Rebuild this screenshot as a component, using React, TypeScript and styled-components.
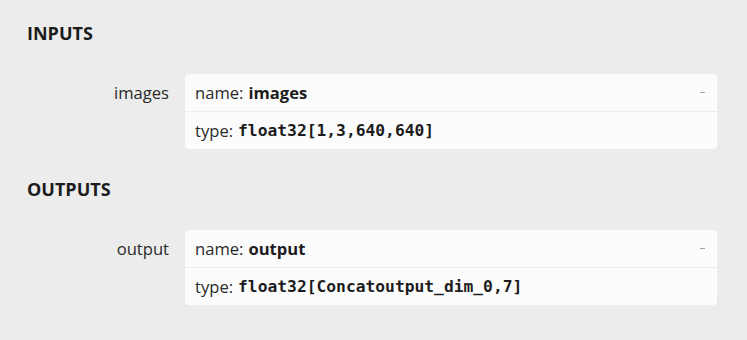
import { createGlobalStyle } from "styled-components";
import styled from "styled-components";

const GlobalStyle = createGlobalStyle`
  html, body {
    margin: 0;
    padding: 0;
    background: #ececec;
  }
  body {
    font-family: "Open Sans", "Noto Sans", sans-serif;
    color: #202020;
  }
`;

interface Argument {
  label: string;
  name: string;
  type: string;
}

const inputs: Argument[] = [
  { label: "images", name: "images", type: "float32[1,3,640,640]" }
];

const outputs: Argument[] = [
  { label: "output", name: "output", type: "float32[Concatoutput_dim_0,7]" }
];

const Page = styled.div`
  width: 747px;
  height: 340px;
  padding: 21px 30px 0 27px;
  box-sizing: border-box;
  display: flex;
  flex-direction: column;
`;

const Section = styled.section`
  display: flex;
  flex-direction: column;
  margin-bottom: 28px;
`;

const Heading = styled.h2`
  margin: 0 0 29px 0;
  font-size: 18px;
  font-weight: 700;
  line-height: 24px;
  color: #1c1c1c;
`;

const Row = styled.div`
  display: grid;
  grid-template-columns: 158px 1fr;
  align-items: start;
`;

const Label = styled.div`
  padding-right: 16px;
  height: 37px;
  display: flex;
  align-items: center;
  justify-content: flex-end;
  font-size: 16.6px;
  color: #2a2a2a;
`;

const Card = styled.div`
  background: #fcfcfc;
  border-radius: 4px;
  display: flex;
  flex-direction: column;
  overflow: hidden;
`;

const Line = styled.div<{ $divider?: boolean }>`
  height: 37px;
  display: flex;
  align-items: center;
  padding: 0 10px;
  font-size: 16.6px;
  color: #2a2a2a;
  border-bottom: ${({ $divider }) => ($divider ? "1px solid #ececec" : "none")};
`;

const Value = styled.b`
  font-weight: 700;
  margin-left: 5px;
  color: #1c1c1c;
`;

const Mono = styled.code`
  font-family: "DejaVu Sans Mono", "Liberation Mono", monospace;
  font-weight: 700;
  font-size: 16.3px;
  margin-left: 5px;
  color: #1c1c1c;
`;

const Toggle = styled.span`
  margin-left: auto;
  margin-right: 2px;
  width: 5px;
  height: 1px;
  background: #a0a0a0;
`;

const ArgumentRow = ({ arg }: { arg: Argument }) => (
  <Row>
    <Label>{arg.label}</Label>
    <Card>
      <Line $divider>
        name:<Value>{arg.name}</Value>
        <Toggle />
      </Line>
      <Line>
        type:<Mono>{arg.type}</Mono>
      </Line>
    </Card>
  </Row>
);

export default function App() {
  return (
    <>
      <GlobalStyle />
      <Page>
        <Section>
          <Heading>INPUTS</Heading>
          {inputs.map((a) => (
            <ArgumentRow key={a.name} arg={a} />
          ))}
        </Section>
        <Section>
          <Heading>OUTPUTS</Heading>
          {outputs.map((a) => (
            <ArgumentRow key={a.name} arg={a} />
          ))}
        </Section>
      </Page>
    </>
  );
}
